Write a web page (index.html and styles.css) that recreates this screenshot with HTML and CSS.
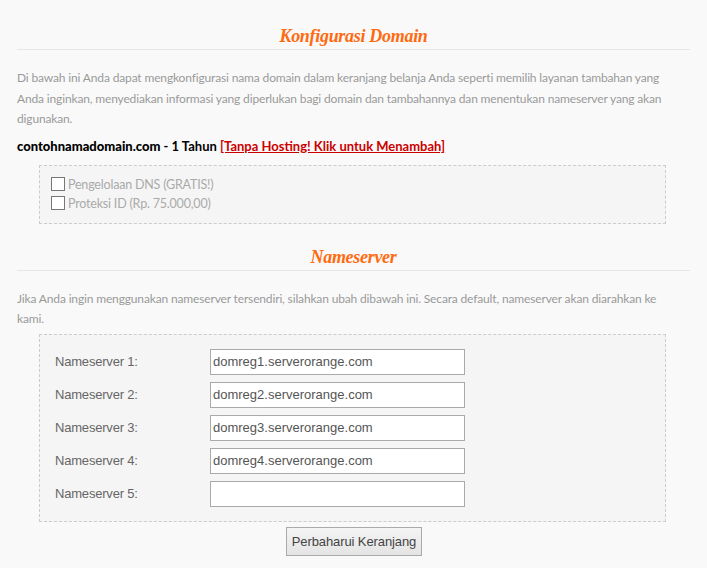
FILE: index.html
```html
<!DOCTYPE html>
<html lang="id">
<head>
<meta charset="utf-8">
<title>Konfigurasi Domain</title>
<link rel="stylesheet" href="styles.css">
</head>
<body>
<div class="page">
  <h2 class="section-title first">Konfigurasi Domain</h2>
  <p class="intro">Di bawah ini Anda dapat mengkonfigurasi nama domain dalam keranjang belanja Anda seperti memilih layanan tambahan yang Anda inginkan, menyediakan informasi yang diperlukan bagi domain dan tambahannya dan menentukan nameserver yang akan digunakan.</p>
  <div class="domain-line"><strong>contohnamadomain.com</strong> - 1 Tahun <a href="#" class="addhost">[Tanpa Hosting! Klik untuk Menambah]</a></div>
  <div class="box addons">
    <label class="opt"><span class="cb"></span>Pengelolaan DNS (GRATIS!)</label>
    <label class="opt"><span class="cb"></span>Proteksi ID (Rp. 75.000,00)</label>
  </div>

  <h2 class="section-title second">Nameserver</h2>
  <p class="intro intro-ns">Jika Anda ingin menggunakan nameserver tersendiri, silahkan ubah dibawah ini. Secara default, nameserver akan diarahkan ke kami.</p>
  <div class="box ns">
    <div class="ns-row"><span class="ns-label">Nameserver 1:</span><input class="ns-input" type="text" value="domreg1.serverorange.com"></div>
    <div class="ns-row"><span class="ns-label">Nameserver 2:</span><input class="ns-input" type="text" value="domreg2.serverorange.com"></div>
    <div class="ns-row"><span class="ns-label">Nameserver 3:</span><input class="ns-input" type="text" value="domreg3.serverorange.com"></div>
    <div class="ns-row"><span class="ns-label">Nameserver 4:</span><input class="ns-input" type="text" value="domreg4.serverorange.com"></div>
    <div class="ns-row"><span class="ns-label">Nameserver 5:</span><input class="ns-input" type="text" value=""></div>
  </div>
  <div class="actions"><button class="btn" type="button">Perbaharui Keranjang</button></div>
</div>
</body>
</html>
```
FILE: styles.css
```css
html, body {
  margin: 0;
  padding: 0;
  background: #f9f9f9;
}
.page {
  padding: 0 17px;
  font-family: "Lato", "Open Sans", sans-serif;
  font-size: 12px;
  color: #999999;
}
.section-title {
  margin: 0;
  padding: 0 0 1px;
  border-bottom: 1px solid #e6e6e6;
  text-align: center;
  font-family: "Liberation Serif", serif;
  font-style: italic;
  font-weight: bold;
  font-size: 18px;
  line-height: 24px;
  color: #ff6a0f;
  letter-spacing: -0.3px;
}
.section-title.first {
  margin-top: 24px;
}
.section-title.second {
  margin-top: 21px;
}
.intro {
  margin: 18px 22px 0 0;
  line-height: 20.5px;
  color: #999999;
  letter-spacing: -0.15px;
}
.intro.intro-ns {
  margin-top: 18px;
}
.domain-line {
  margin-top: 7px;
  font-size: 13px;
  line-height: 18px;
  color: #000;
  font-weight: bold;
}
.domain-line .addhost {
  color: #cc0000;
  text-decoration: underline;
}
.box {
  margin: 10px 24px 0 22px;
  border: 1px dashed #cccccc;
  background: #f5f5f5;
}
.addons {
  margin-top: 10px;
  padding: 11px 11px 12px;
  display: flex;
  flex-direction: column;
  gap: 4px;
}
.opt {
  display: flex;
  align-items: center;
  font-size: 12.5px;
  line-height: 15px;
  color: #aaaaaa;
  letter-spacing: -0.2px;
}
.cb {
  width: 12px;
  height: 12px;
  border: 1px solid #777;
  background: #fff;
  margin-right: 3px;
  flex: none;
}
.ns {
  margin-top: 4px;
  padding: 14px 15px 14px;
  display: flex;
  flex-direction: column;
  gap: 7px;
}
.ns-row {
  display: flex;
  align-items: center;
}
.ns-label {
  width: 155px;
  font-family: "Liberation Sans", Arial, sans-serif;
  font-size: 13px;
  color: #666666;
  letter-spacing: -0.2px;
}
.ns-input {
  box-sizing: border-box;
  width: 255px;
  height: 26px;
  margin: 0;
  border: 1px solid #aaaaaa;
  background: #fff;
  padding: 0 2px;
  font-family: "Liberation Sans", Arial, sans-serif;
  font-size: 13px;
  color: #555;
  outline: none;
}
.actions {
  display: flex;
  justify-content: center;
  margin-top: 5px;
}
.btn {
  box-sizing: border-box;
  height: 29px;
  padding: 0 5px;
  border: 1px solid #aaaaaa;
  background: linear-gradient(#f4f4f4, #e4e4e4);
  font-family: "Liberation Sans", Arial, sans-serif;
  font-size: 13px;
  letter-spacing: -0.1px;
  color: #444;
  margin-left: 1px;
}
```
